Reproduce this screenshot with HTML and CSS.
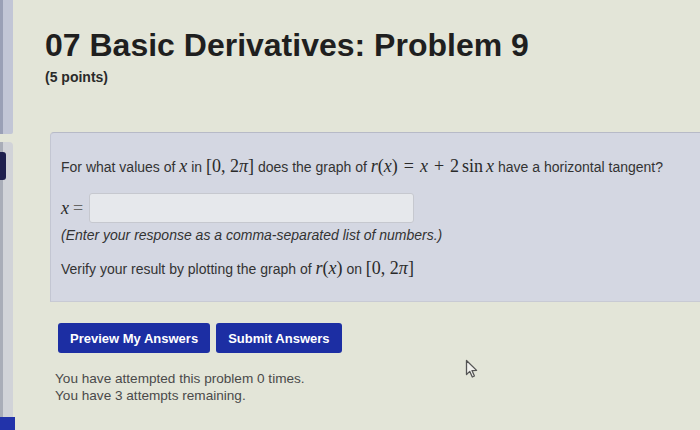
FILE: index.html
```html
<!DOCTYPE html>
<html>
<head>
<meta charset="utf-8">
<link rel="stylesheet" href="styles.css">
</head>
<body>
<div class="page">
  <aside class="sidebar">
    <div class="side-top"></div>
    <div class="side-panel"><div class="side-tab"></div></div>
    <div class="side-foot"></div>
  </aside>
  <main class="main">
    <h1 class="title">07 Basic Derivatives: Problem 9</h1>
    <div class="points">(5 points)</div>
    <section class="problem">
      <p class="line q">For what values of <span class="m"><span class="mi">x</span></span> in <span class="m">[0, 2<span class="mi">π</span>]</span> does the graph of <span class="m"><span class="mi">r</span>(<span class="mi">x</span>)<span class="op">=</span><span class="mi">x</span><span class="op">+</span>2<span class="fn">sin</span><span class="mi">x</span></span> have a horizontal tangent?</p>
      <div class="answer">
        <span class="m"><span class="mi">x</span><span class="op eq">=</span></span>
        <div class="input"></div>
      </div>
      <p class="line note">(Enter your response as a comma-separated list of numbers.)</p>
      <p class="line verify">Verify your result by plotting the graph of <span class="m"><span class="mi">r</span>(<span class="mi">x</span>)</span> on <span class="m">[0, 2<span class="mi">π</span>]</span></p>
    </section>
    <div class="buttons">
      <button class="btn">Preview My Answers</button>
      <button class="btn">Submit Answers</button>
    </div>
    <div class="attempts">
      <div>You have attempted this problem 0 times.</div>
      <div>You have 3 attempts remaining.</div>
    </div>
  </main>
</div>
<svg class="cursor" width="14" height="20" viewBox="0 0 14 20"><path d="M1.5 1.5 L1.5 15.5 L4.8 12.4 L7.3 18 L9.4 17 L7 11.6 L11.6 11.4 Z" fill="#f2f2ee" stroke="#555" stroke-width="1.3" stroke-linejoin="round"/></svg>
</body>
</html>
```
FILE: styles.css
```css
html, body {
  margin: 0;
  padding: 0;
  width: 700px;
  height: 430px;
  overflow: hidden;
  background: #e3e5d8;
  font-family: "Liberation Sans", Arial, sans-serif;
}
.page {
  display: flex;
  height: 430px;
}
.sidebar {
  width: 13px;
  flex: none;
  display: flex;
  flex-direction: column;
}
.side-top {
  height: 134px;
  background: #c2c6d6;
  border-left: 3px solid #9aa0b6;
  box-sizing: border-box;
  border-bottom-right-radius: 2px;
}
.side-panel {
  margin-top: 8px;
  flex: 1;
  background: #d1d3d8;
  border-left: 3px solid #a9adb8;
  border-top-right-radius: 4px;
  box-sizing: border-box;
  padding-top: 10px;
}
.side-tab {
  width: 6px;
  height: 28px;
  margin-left: -3px;
  background: #1e1f4e;
  border-radius: 0 3px 3px 0;
}
.side-foot {
  height: 13px;
  width: 15px;
  background: #2233aa;
}
.main {
  flex: 1;
  padding-left: 32px;
  min-width: 0;
}
.title {
  margin: 27px 0 0;
  font-size: 32px;
  line-height: 37px;
  font-weight: bold;
  color: #1f1f1f;
}
.points {
  margin-top: 5px;
  font-size: 14px;
  line-height: 17px;
  font-weight: bold;
  color: #2a2a2a;
}
.problem {
  margin: 46px 0 0 5px;
  padding: 24px 0 22px 10px;
  background: #d4d7e2;
  border-top: 1px solid #b7bac7;
  border-left: 1px solid #c3c6d2;
  border-top-left-radius: 4px;
  border-bottom: 1px solid #c8cad4;
}
.line {
  margin: 0;
  font-size: 14px;
  line-height: 20px;
  color: #333;
  white-space: nowrap;
}
.m {
  font-family: "Liberation Serif", "Times New Roman", serif;
  font-size: 18px;
  line-height: 14px;
  color: #2a2a2a;
}
.mi {
  font-style: italic;
}
.op {
  padding: 0 6px;
}
.fn {
  padding: 0 3px 0 3px;
}
.answer {
  margin-top: 16px;
  display: flex;
  align-items: center;
  gap: 6px;
  height: 30px;
}
.eq {
  color: #666;
  padding: 0 0 0 4px;
}
.input {
  width: 323px;
  height: 28px;
  background: #e6e8ec;
  border: 1px solid #c6c8cf;
  border-radius: 3px;
}
.note {
  margin-top: 2px;
  font-style: italic;
}
.verify {
  margin-top: 14px;
}
.buttons {
  margin: 21px 0 0 13px;
  display: flex;
  gap: 6px;
}
.btn {
  height: 30px;
  padding: 0 12px;
  border: none;
  border-radius: 3px;
  background: #1c2ea3;
  color: #fff;
  font-family: "Liberation Sans", Arial, sans-serif;
  font-size: 13px;
  font-weight: bold;
}
.attempts {
  margin: 17px 0 0 10px;
  font-size: 13.6px;
  line-height: 17px;
  color: #4a4a4a;
}
.cursor {
  position: absolute;
  left: 465px;
  top: 359px;
}
```
